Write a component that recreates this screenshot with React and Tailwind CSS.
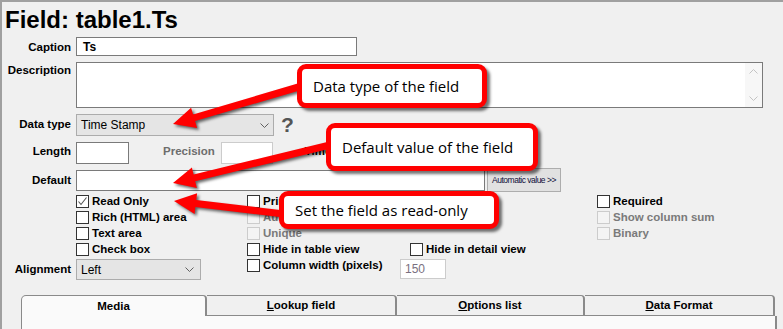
import React from 'react';

function arrowPoints(sx, sy, tx, ty, w = 7, L = 22, H = 21) {
  const dx = tx - sx, dy = ty - sy;
  const len = Math.hypot(dx, dy);
  const ux = dx / len, uy = dy / len;
  const nx = -uy, ny = ux;
  const bx = tx - ux * L, by = ty - uy * L;
  const p = [
    [sx + (nx * w) / 2, sy + (ny * w) / 2],
    [bx + (nx * w) / 2, by + (ny * w) / 2],
    [bx + (nx * H) / 2, by + (ny * H) / 2],
    [tx, ty],
    [bx - (nx * H) / 2, by - (ny * H) / 2],
    [bx - (nx * w) / 2, by - (ny * w) / 2],
    [sx - (nx * w) / 2, sy - (ny * w) / 2],
  ];
  return p.map(([x, y]) => `${x.toFixed(1)},${y.toFixed(1)}`).join(' ');
}

const Chevron = () => (
  <svg width="9" height="5" viewBox="0 0 9 5">
    <polyline points="0.5,0.5 4.5,4.5 8.5,0.5" fill="none" stroke="#606060" strokeWidth="1" />
  </svg>
);

function Check({ label, checked, disabled }) {
  return (
    <div className="flex items-center h-[13px]">
      <span
        className={
          disabled
            ? 'w-[13px] h-[13px] shrink-0 border border-[#cccccc] bg-[#f4f4f4]'
            : 'w-[13px] h-[13px] shrink-0 border border-[#333333] bg-white flex items-center justify-center'
        }
      >
        {checked && (
          <svg width="11" height="11" viewBox="0 0 11 11">
            <polyline points="1.5,5.5 4,8.5 9.5,1.5" fill="none" stroke="#555555" strokeWidth="1.1" />
          </svg>
        )}
      </span>
      <span
        className={
          disabled
            ? 'ml-[3px] font-bold text-[11.5px] leading-[13px] whitespace-nowrap text-[#7a7a7a]'
            : 'ml-[3px] font-bold text-[11.5px] leading-[13px] whitespace-nowrap text-black'
        }
      >
        {label}
      </span>
    </div>
  );
}

function Callout({ className, children }) {
  return (
    <div
      className={
        'absolute flex items-center pl-[11px] border-[5px] border-[#ff0000] rounded-[9px] bg-white shadow-[3px_3px_3px_rgba(0,0,0,0.55)] font-["Open_Sans","Noto_Sans",sans-serif] text-[15px] text-black whitespace-nowrap ' +
        className
      }
    >
      {children}
    </div>
  );
}

export default function App() {
  return (
    <div className="relative w-[783px] h-[329px] overflow-hidden bg-[#f0f0f0] text-black font-['Liberation_Sans',Arial,sans-serif]">
      <div className="h-full border-l-2 border-t-2 border-[#a0a0a0] flex flex-col">
        <h1 className="pl-[3px] pt-[4px] text-[24px] font-bold leading-[28px]">Field: table1.Ts</h1>

        {/* Caption */}
        <div className="flex items-center mt-[3px] h-[19px]">
          <div className="w-[69px] text-right font-bold text-[11.5px] leading-[14px]">Caption</div>
          <div className="ml-[5px] w-[281px] h-[19px] border border-[#7a7a7a] bg-white flex items-center pl-[6px] font-bold text-[12px]">
            Ts
          </div>
        </div>

        {/* Description */}
        <div className="flex items-start mt-[6px] h-[46px]">
          <div className="w-[69px] mt-[1px] text-right font-bold text-[11.5px] leading-[14px]">Description</div>
          <div className="ml-[5px] w-[687px] h-[46px] border border-[#7a7a7a] bg-white flex">
            <div className="flex-1" />
            <div className="w-[17px] bg-[#f7f7f7] flex flex-col items-center justify-between py-[6px]">
              <svg width="9" height="5" viewBox="0 0 9 5">
                <polyline points="0.5,4.5 4.5,0.5 8.5,4.5" fill="none" stroke="#c4c4c4" strokeWidth="1" />
              </svg>
              <svg width="9" height="5" viewBox="0 0 9 5">
                <polyline points="0.5,0.5 4.5,4.5 8.5,0.5" fill="none" stroke="#c4c4c4" strokeWidth="1" />
              </svg>
            </div>
          </div>
        </div>

        {/* Data type */}
        <div className="flex items-center mt-[6px] h-[22px]">
          <div className="w-[69px] text-right font-bold text-[11.5px] leading-[14px] -mt-[3px]">Data type</div>
          <div className="ml-[5px] w-[198px] h-[22px] border border-[#acacac] bg-[#e5e5e5] flex items-center justify-between pl-[4px] pr-[4px] text-[12px]">
            <span>Time Stamp</span>
            <Chevron />
          </div>
          <span className="ml-[7px] text-[21px] font-bold text-[#555555] leading-[22px]">?</span>
        </div>

        {/* Length */}
        <div className="flex items-center mt-[6px] h-[22px]">
          <div className="w-[69px] text-right font-bold text-[11.5px] leading-[14px] -mt-[5px]">Length</div>
          <div className="ml-[5px] w-[53px] h-[22px] border border-[#7a7a7a] bg-white" />
          <div className="ml-[34px] font-bold text-[11.5px] leading-[14px] text-[#6d6d6d] -mt-[5px]">Precision</div>
          <div className="ml-[6px] w-[52px] h-[22px] border border-[#cccccc] bg-white" />
          <div className="ml-[32px] font-bold text-[11.5px] leading-[14px] -mt-[5px]">Time zone</div>
        </div>

        {/* Default */}
        <div className="flex items-center mt-[4px] h-[24px]">
          <div className="w-[69px] text-right font-bold text-[11.5px] leading-[14px]">Default</div>
          <div className="ml-[5px] w-[409px] h-[21px] border border-[#7a7a7a] bg-white" />
          <div className="ml-[2px] w-[74px] h-[24px] border border-[#adadad] bg-[#e1e1e1] flex items-center justify-center text-[8.5px] tracking-[-0.5px] text-[#10103a] whitespace-nowrap">
            Automatic value &gt;&gt;
          </div>
        </div>

        {/* Checkbox grid */}
        <div className="ml-[74px] mt-[3px] grid grid-cols-[171px_163px_187px_160px] grid-rows-[13px_13px_13px_13px] gap-y-[3px]">
          <Check label="Read Only" checked />
          <Check label="Primary key" />
          <div />
          <Check label="Required" />

          <Check label="Rich (HTML) area" />
          <Check label="Auto increment" disabled />
          <div />
          <Check label="Show column sum" disabled />

          <Check label="Text area" />
          <Check label="Unique" disabled />
          <div />
          <Check label="Binary" disabled />

          <Check label="Check box" />
          <Check label="Hide in table view" />
          <Check label="Hide in detail view" />
          <div />
        </div>

        {/* Alignment row */}
        <div className="flex items-start mt-[3px] h-[21px]">
          <div className="w-[69px] self-center text-right font-bold text-[11.5px] leading-[14px] -mt-[2px]">Alignment</div>
          <div className="ml-[5px] w-[125px] h-[21px] border border-[#acacac] bg-[#e5e5e5] flex items-center justify-between pl-[4px] pr-[6px] text-[12px]">
            <span>Left</span>
            <Chevron />
          </div>
          <div className="ml-[46px] w-[153px]">
            <Check label="Column width (pixels)" />
          </div>
          <div className="w-[46px] h-[20px] border border-[#cccccc] bg-white flex items-center pl-[4px] text-[12px] text-[#7a7080]">
            150
          </div>
        </div>

        {/* Tabs */}
        <div className="flex ml-[19px] mt-[15px] h-[21px] font-bold text-[11.5px]">
          <div className="w-[186px] h-[21px] border-l border-t border-r-2 border-[#8a8a8a] rounded-tl-[5px] rounded-tr-[4px] bg-[#fafafa] flex items-center justify-center pt-[2px]">
            Media
          </div>
          <div className="w-[190px] h-[21px] border-t border-b border-r-2 border-[#8a8a8a] rounded-tr-[4px] bg-[#f0f0f0] flex items-center justify-center">
            <span><span className="underline">L</span>ookup field</span>
          </div>
          <div className="w-[188px] h-[21px] border-t border-b border-r-2 border-[#8a8a8a] rounded-tr-[4px] bg-[#f0f0f0] flex items-center justify-center">
            <span><span className="underline">O</span>ptions list</span>
          </div>
          <div className="w-[190px] h-[21px] border-t border-b border-r-2 border-[#8a8a8a] rounded-tr-[4px] bg-[#f0f0f0] flex items-center justify-center">
            <span><span className="underline">D</span>ata Format</span>
          </div>
        </div>
        <div className="ml-[19px] w-[756px] flex-1 border-l border-r-2 border-[#8a8a8a] bg-[#fafafa]" />
      </div>

      {/* Arrows overlay */}
      <svg
        className="absolute left-0 top-0 drop-shadow-[2px_2px_1.5px_rgba(0,0,0,0.6)]"
        width="783"
        height="329"
        viewBox="0 0 783 329"
      >
        <polygon points={arrowPoints(302, 86, 173, 124)} fill="#ff0000" />
        <polygon points={arrowPoints(330, 145, 173, 183)} fill="#ff0000" />
        <polygon points={arrowPoints(284, 214, 174, 201)} fill="#ff0000" />
      </svg>

      {/* Callouts */}
      <Callout className="left-[297px] top-[64px] w-[190px] h-[44px]">Data type of the field</Callout>
      <Callout className="left-[326px] top-[123px] w-[212px] h-[48px]">Default value of the field</Callout>
      <Callout className="left-[279px] top-[191px] w-[220px] h-[38px]">Set the field as read-only</Callout>
    </div>
  );
}
